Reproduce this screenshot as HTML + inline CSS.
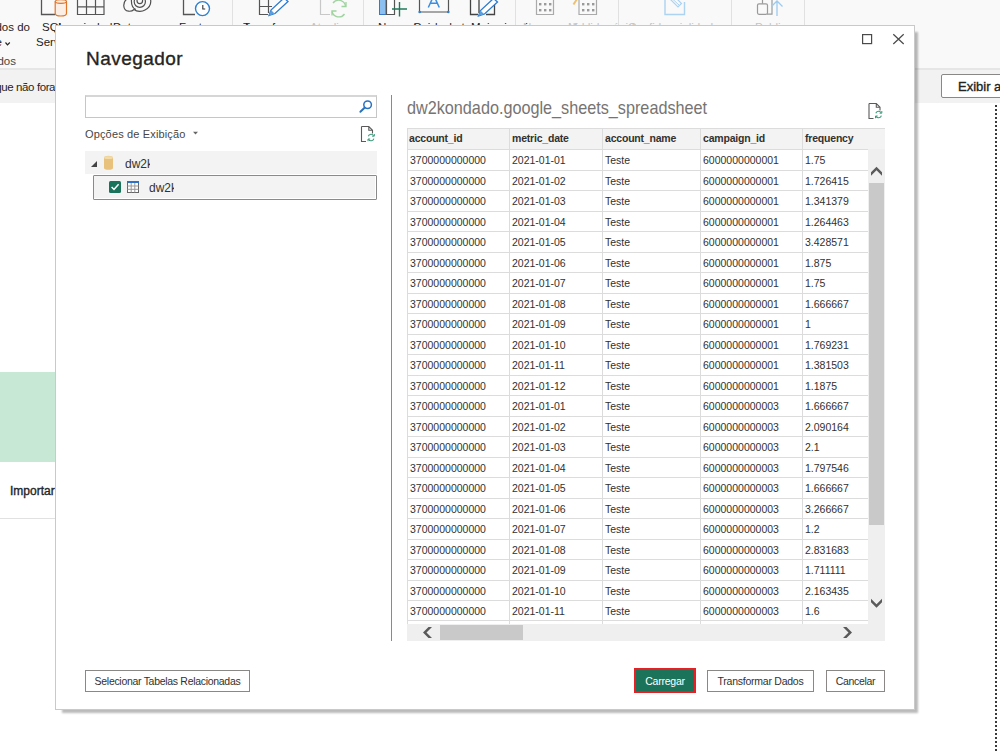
<!DOCTYPE html>
<html><head><meta charset="utf-8">
<style>
*{box-sizing:border-box;margin:0;padding:0}
html,body{width:1000px;height:752px;overflow:hidden;background:#fff}
body{position:relative;font-family:"Liberation Sans",sans-serif;color:#252423}
.a{position:absolute}
.rib{left:0;top:0;width:1000px;height:69px;background:#f9f9f9}
.ribline{left:0;top:68px;width:1000px;height:2px;background:#e6e6e6}
.bar{left:0;top:70px;width:1000px;height:33px;background:#f2f2f2}
.lbl{font-size:12px;color:#252423;white-space:pre;line-height:14px}
.sep{width:1px;background:#e1e1e1}
.dlg{left:55px;top:25px;width:860px;height:685px;background:#fff;border:1px solid #c9c9c9;box-shadow:5px 5px 2px -2px rgba(0,0,0,.27)}
.txt{white-space:pre}
.tr{position:absolute;left:407px;width:461px;border-top:1px solid #dcdcdc;overflow:hidden}
.td{position:absolute;top:0;height:100%;border-left:1px solid #dcdcdc;padding-left:2px;font-size:10.5px;line-height:20px;color:#323130;white-space:pre;overflow:hidden}
.c1{left:0;width:102px}
.c2{left:102px;width:93px}
.c3{left:195px;width:98px}
.c4{left:293px;width:102px}
.c5{left:395px;width:100px}
.th{position:absolute;top:0;height:100%;border-left:1px solid #dcdcdc;padding-left:2px;font-size:10.5px;font-weight:700;letter-spacing:-0.2px;line-height:20px;color:#323130;white-space:pre}
.btn{position:absolute;height:22px;border:1px solid #8a8886;background:#fff;font-size:10.5px;letter-spacing:-0.25px;line-height:20px;text-align:center;color:#323130;white-space:pre}
</style></head><body>
<div class="a rib"></div>
<div class="a ribline"></div>
<div class="a bar"></div>
<!-- ribbon labels -->
<div class="a lbl" style="right:970px;top:20px;font-size:11.5px;text-align:right">Hub de dados do</div>
<div class="a lbl" style="right:998px;top:35px;font-size:11.5px;text-align:right">OneLake</div>
<svg class="a" style="left:0;top:0" width="1000" height="69" viewBox="0 0 1000 69">
 <path d="M5.5 42.5 L7.5 44.8 L9.8 42.5" fill="none" stroke="#252423" stroke-width="1.2"/>
 <!-- SQL server -->
 <path d="M41.5 -1 V14.5 H55" fill="none" stroke="#555" stroke-width="1.3"/>
 <path d="M55.2 1.5 V13.5 Q55.2 16 60.8 16 Q66.5 16 66.5 13.5 V1.5" fill="#fbeee4" stroke="#e07428" stroke-width="1.2"/>
 <ellipse cx="60.85" cy="1.5" rx="5.65" ry="1.8" fill="#fbeee4" stroke="#e07428" stroke-width="1.2"/>
 <!-- grid -->
 <path d="M77.5 -1 V14.5 H104 V-1 M86.5 -1 V14.5 M95.5 -1 V14.5 M77.5 6.8 H104" fill="none" stroke="#555" stroke-width="1.2"/>
 <!-- dataverse swirl -->
 <path d="M127 -1 C122.5 2 122.5 10.5 128.5 11.2 C131 11.5 133 10.5 134 9.5 C137 11.8 142 11.8 145 10 C149 8 151.5 4 150.5 -1" fill="none" stroke="#505050" stroke-width="1.2"/>
 <path d="M131.5 -1 C131 5 133 8.5 136 9.5" fill="none" stroke="#505050" stroke-width="1.2"/>
 <circle cx="139.8" cy="1.8" r="5.6" fill="none" stroke="#505050" stroke-width="1.2"/>
 <circle cx="139.8" cy="0.8" r="2.8" fill="none" stroke="#505050" stroke-width="1.2"/>
 <!-- fontes recentes -->
 <path d="M183.5 -1 V14.5 H195" fill="none" stroke="#555" stroke-width="1.3"/>
 <circle cx="202.5" cy="8.6" r="7" fill="#fff" stroke="#2f80d0" stroke-width="1.4"/>
 <path d="M202.8 5 V9 H205.2" fill="none" stroke="#333" stroke-width="1.1"/>
 <rect x="232" y="0" width="1" height="25" fill="#e1e1e1"/>
 <!-- transformar -->
 <path d="M259.5 -1 V14.5 H268 M259.5 6.5 H272 M268.5 -1 V13" fill="none" stroke="#555" stroke-width="1.2"/>
 <path d="M269 15.5 L271 10 L284 -2 L288 1.5 L275 13.5 Z" fill="#fff" stroke="#2b7bd0" stroke-width="1.3"/>
 <path d="M269 15.5 L271 10 L274.5 13.5 Z" fill="#5aa0e0"/>
 <!-- atualizar -->
 <path d="M320.5 -1 V14.5 H330" fill="none" stroke="#c8c8c8" stroke-width="1.2"/>
 <path d="M333 3 A7 7 0 0 1 345.5 6 M344.5 14 A7 7 0 0 1 332 11.5" fill="none" stroke="#9fd39f" stroke-width="1.3"/>
 <path d="M346 2 V6.5 H341.5 M332 15.5 V11 H336.5" fill="none" stroke="#9fd39f" stroke-width="1.3"/>
 <rect x="363" y="0" width="1" height="25" fill="#e1e1e1"/>
 <!-- novo visual -->
 <rect x="379.5" y="-1" width="6.5" height="15.5" fill="#8cc0f0" stroke="#3a78c5" stroke-width="1"/>
 <path d="M386.5 -1 V14.5 H394.5 V-1" fill="#fff" stroke="#555" stroke-width="1.2"/>
 <path d="M399.5 2 V16.5 M392 9 H407" fill="none" stroke="#1f7a5b" stroke-width="1.4"/>
 <!-- caixa de texto -->
 <path d="M419.5 -1 V12 H448.5 V-1" fill="none" stroke="#555" stroke-width="1.2"/>
 <circle cx="419.7" cy="12" r="1.3" fill="#2f80d0"/><circle cx="448.3" cy="12" r="1.3" fill="#2f80d0"/>
 <path d="M428.3 7.5 L433.8 -4.5 L439.3 7.5 M430.2 3.3 H437.4" fill="none" stroke="#3b8ee0" stroke-width="1.5"/>
 <!-- mais visuais -->
 <path d="M478 14.5 H470.5 V-1 M479 -1 V13 M486 14.5 H494.5 V-1" fill="none" stroke="#444" stroke-width="1.3"/>
 <path d="M478.5 16 L480.5 10.5 L493.5 -1.5 L497.5 2 L484.5 14 Z" fill="#fff" stroke="#2b7bd0" stroke-width="1.3"/>
 <path d="M478.5 16 L480.5 10.5 L484 14 Z" fill="#5aa0e0"/>
 <rect x="515" y="0" width="1" height="25" fill="#e1e1e1"/>
 <!-- nova medida -->
 <path d="M536.5 -1 V14.5 H553.5 V-1" fill="none" stroke="#aaa" stroke-width="1.2"/>
 <g fill="#9a9a9a"><rect x="539" y="3" width="2.4" height="2.4"/><rect x="544" y="3" width="2.4" height="2.4"/><rect x="549" y="3" width="2.4" height="2.4"/><rect x="539" y="9" width="2.4" height="2.4"/><rect x="544" y="9" width="2.4" height="2.4"/><rect x="549" y="9" width="2.4" height="2.4"/></g>
 <path d="M573.5 4.5 L577 -1" fill="none" stroke="#f0c070" stroke-width="2"/>
 <path d="M579 -1 V14.5 H596.5 V-1" fill="none" stroke="#aaa" stroke-width="1.2"/>
 <g fill="#9a9a9a"><rect x="582" y="3" width="2.4" height="2.4"/><rect x="587" y="3" width="2.4" height="2.4"/><rect x="592" y="3" width="2.4" height="2.4"/><rect x="582" y="9" width="2.4" height="2.4"/><rect x="587" y="9" width="2.4" height="2.4"/><rect x="592" y="9" width="2.4" height="2.4"/></g>
 <rect x="618" y="0" width="1" height="25" fill="#e1e1e1"/>
 <!-- confidencialidade -->
 <path d="M665 -1 V14.5 H684.5 V2" fill="none" stroke="#acd3f2" stroke-width="1.4"/>
 <path d="M670 -1 L678 7 L681.5 3.5 L675 -3" fill="none" stroke="#acd3f2" stroke-width="1.2"/>
 <path d="M672.5 -1 L679 5" fill="none" stroke="#acd3f2" stroke-width="1"/>
 <rect x="731" y="0" width="1" height="25" fill="#e1e1e1"/>
 <!-- publicar -->
 <rect x="757.5" y="3.8" width="10" height="10.5" rx="1.5" fill="none" stroke="#9a9a9a" stroke-width="1.2"/>
 <path d="M762.5 0 V3.8 M772 -1 V14.2 H767" fill="none" stroke="#9a9a9a" stroke-width="1.2"/>
 <path d="M777 16 V1 M771.5 6.5 L777 1 L782.5 6.5" fill="none" stroke="#9ccbef" stroke-width="1.3"/>
 <rect x="804" y="0" width="1" height="25" fill="#e1e1e1"/>
</svg>
<div class="a lbl" style="left:42px;top:20px;font-size:11.5px">SQL</div>
<div class="a lbl" style="left:36px;top:35px;font-size:11.5px">Server</div>
<div class="a lbl" style="left:58px;top:20px;font-size:11.5px">Inserir dados</div>
<div class="a lbl" style="left:113px;top:20px;font-size:11.5px">Dataverse</div>
<div class="a lbl" style="left:179px;top:20px;font-size:11.5px">Fontes recentes</div>
<div class="a lbl" style="left:243px;top:20px;font-size:11.5px">Transformar</div>
<div class="a lbl" style="left:310px;top:20px;font-size:11.5px;color:#c4c4c4">Atualizar</div>
<div class="a lbl" style="left:378px;top:20px;font-size:11.5px">Novo visual</div>
<div class="a lbl" style="left:413px;top:20px;font-size:11.5px">Caixa de texto</div>
<div class="a lbl" style="left:471px;top:20px;font-size:11.5px">Mais visuais</div>
<div class="a lbl" style="left:523px;top:20px;font-size:11.5px;color:#c4c4c4">Nova medida</div>
<div class="a lbl" style="left:568px;top:20px;font-size:11.5px;color:#c4c4c4">Medida rápida</div>
<div class="a lbl" style="left:628px;top:20px;font-size:11.5px;color:#c4c4c4">Confidencialidade</div>
<div class="a lbl" style="left:755px;top:20px;font-size:11.5px;color:#c4c4c4">Publicar</div>
<div class="a lbl" style="right:984px;top:54px;font-size:11.5px;color:#484644;text-align:right">Dados</div>
<!-- bar -->
<div class="a txt" style="left:-4.7px;top:80px;font-size:11.5px;line-height:15px;letter-spacing:-0.4px;color:#252423">que não foram</div>
<div class="a" style="left:941px;top:74px;width:80px;height:24px;border:1px solid #8a8886;border-radius:2px;background:#fff"></div>
<div class="a txt" style="left:958px;top:79px;font-size:13px;line-height:15px;font-weight:400;-webkit-text-stroke:0.35px #252423;color:#252423">Exibir alterações</div>
<!-- canvas left -->
<div class="a" style="left:0;top:372px;width:60px;height:90px;background:#c8e8d6"></div>
<div class="a txt" style="left:10px;top:484px;font-size:12px;line-height:14px;font-weight:400;-webkit-text-stroke:0.35px #252423;color:#252423">Importar</div>
<div class="a" style="left:0;top:518px;width:60px;height:1px;background:#e1e1e1"></div>
<div class="a" style="left:995px;top:105px;width:2px;height:660px;background-image:linear-gradient(#3a3a3a 50%,transparent 50%);background-size:2px 4px"></div>
<div class="a dlg"></div>
<svg class="a" style="left:855px;top:28px" width="56" height="22" viewBox="855 28 56 22">
 <rect x="862.6" y="34.6" width="9" height="9" fill="none" stroke="#4a4a4a" stroke-width="1.2"/>
 <path d="M893.3 34.2 L903.7 44 M903.7 34.2 L893.3 44" fill="none" stroke="#4a4a4a" stroke-width="1.2"/>
</svg>
<div class="a txt" style="left:86px;top:48px;font-size:19px;line-height:22px;letter-spacing:0.45px;font-weight:400;-webkit-text-stroke:0.35px #252423;color:#252423">Navegador</div>
<!-- search -->
<div class="a" style="left:85px;top:95px;width:292px;height:23px;border:1px solid #c6c6c6;border-top:2px solid #d6d6d6;background:#fff"></div>
<svg class="a" style="left:355px;top:96px" width="22" height="20" viewBox="355 96 22 20">
 <circle cx="367.6" cy="104.8" r="3.8" fill="none" stroke="#2a72c0" stroke-width="1.5"/>
 <path d="M364.8 107.6 L360.4 111.7" fill="none" stroke="#2a72c0" stroke-width="2" stroke-linecap="round"/>
</svg>
<div class="a txt" style="left:85px;top:128px;font-size:11px;line-height:13px;letter-spacing:0.15px;color:#484644">Opções de Exibição</div>
<svg class="a" style="left:190px;top:128px" width="10" height="10" viewBox="190 128 10 10">
 <path d="M193 131.8 H198 L195.5 134.5 Z" fill="#666"/>
</svg>
<svg class="a" style="left:358px;top:123px" width="20" height="20" viewBox="358 123 20 20">
 <path d="M361.5 126.5 H368.8 L372.5 130.2 V133.5 M361.5 126.5 V141.5 H366 M368.8 126.5 V130.2 H372.5" fill="none" stroke="#5a5a5a" stroke-width="1.1"/>
 <path d="M368.3 136.2 A2.9 2.9 0 0 1 373.6 135.8 M373.9 138.6 A2.9 2.9 0 0 1 368.5 139.2" fill="none" stroke="#3a9a7a" stroke-width="1.1"/>
 <path d="M374.3 134 V136.2 H372.1 M368 141.2 V139 H370.2" fill="none" stroke="#3a9a7a" stroke-width="1"/>
</svg>
<!-- tree -->
<div class="a" style="left:85px;top:151px;width:292px;height:23px;background:#f3f3f3"></div>
<svg class="a" style="left:88px;top:153px" width="30" height="20" viewBox="88 153 30 20">
 <path d="M91 167 L97 161 V167 Z" fill="#444"/>
 <path d="M104 157.3 V168 Q104 169.8 108.5 169.8 Q113 169.8 113 168 V157.3 Z" fill="#e8c27c"/>
 <ellipse cx="108.5" cy="157.3" rx="4.5" ry="1.6" fill="#edcf95"/>
 <ellipse cx="108.5" cy="157.8" rx="4.5" ry="1.2" fill="#f2dba8"/>
</svg>
<div class="a txt" style="left:125px;top:157px;width:25px;overflow:hidden;font-size:12px;line-height:14px;color:#323130">dw2kondado</div>
<div class="a" style="left:93px;top:175px;width:284px;height:25px;border:1px solid #8a8a8a;background:#f3f3f3;border-radius:1px;box-shadow:inset -1px -1px 0 #fff"></div>
<svg class="a" style="left:106px;top:178px" width="40" height="20" viewBox="106 178 40 20">
 <rect x="109" y="181" width="12" height="12" rx="1.5" fill="#18735a"/>
 <path d="M111.6 187 L114 189.5 L118.6 184.3" fill="none" stroke="#fff" stroke-width="1.5"/>
 <rect x="127.5" y="181.5" width="11" height="11" fill="#fff" stroke="#666" stroke-width="1"/>
 <rect x="127" y="181" width="12" height="2" fill="#2f72c4"/>
 <path d="M127.5 186 H138.5 M127.5 189.3 H138.5 M131.2 183 V192.5 M134.8 183 V192.5" stroke="#999" stroke-width="1"/>
</svg>
<div class="a txt" style="left:149px;top:181px;width:25px;overflow:hidden;font-size:12px;line-height:14px;color:#323130">dw2kondado</div>
<!-- divider -->
<div class="a" style="left:391px;top:95px;width:1px;height:546px;background:#8a8a8a"></div>
<div class="a txt" style="left:407px;top:98px;font-size:18.5px;line-height:20px;color:#767472;transform:scaleX(0.876);transform-origin:0 0">dw2kondado.google_sheets_spreadsheet</div>
<svg class="a" style="left:865px;top:100px" width="20" height="20" viewBox="357.5 123 20 20">
 <path d="M361.5 126.5 H368.8 L372.5 130.2 V133.5 M361.5 126.5 V141.5 H366 M368.8 126.5 V130.2 H372.5" fill="none" stroke="#5a5a5a" stroke-width="1.1"/>
 <path d="M368.3 136.2 A2.9 2.9 0 0 1 373.6 135.8 M373.9 138.6 A2.9 2.9 0 0 1 368.5 139.2" fill="none" stroke="#3a9a7a" stroke-width="1.1"/>
 <path d="M374.3 134 V136.2 H372.1 M368 141.2 V139 H370.2" fill="none" stroke="#3a9a7a" stroke-width="1"/>
</svg>
<!-- table header -->
<div class="a" style="left:407px;top:128px;width:478px;height:21px;background:#f3f3f3;border-top:1px solid #dcdcdc;border-left:1px solid #dcdcdc"></div>
<div class="tr" style="top:128px;height:21px;width:478px;border-top:none">
 <div class="th c1" style="border-left:none">account_id</div><div class="th c2">metric_date</div><div class="th c3">account_name</div><div class="th c4">campaign_id</div><div class="th c5">frequency</div>
</div>
<div class="tr" style="top:149px;height:21px"><div class="td c1">3700000000000</div><div class="td c2">2021-01-01</div><div class="td c3">Teste</div><div class="td c4">6000000000001</div><div class="td c5">1.75</div></div>
<div class="tr" style="top:170px;height:20px"><div class="td c1">3700000000000</div><div class="td c2">2021-01-02</div><div class="td c3">Teste</div><div class="td c4">6000000000001</div><div class="td c5">1.726415</div></div>
<div class="tr" style="top:190px;height:21px"><div class="td c1">3700000000000</div><div class="td c2">2021-01-03</div><div class="td c3">Teste</div><div class="td c4">6000000000001</div><div class="td c5">1.341379</div></div>
<div class="tr" style="top:211px;height:20px"><div class="td c1">3700000000000</div><div class="td c2">2021-01-04</div><div class="td c3">Teste</div><div class="td c4">6000000000001</div><div class="td c5">1.264463</div></div>
<div class="tr" style="top:231px;height:21px"><div class="td c1">3700000000000</div><div class="td c2">2021-01-05</div><div class="td c3">Teste</div><div class="td c4">6000000000001</div><div class="td c5">3.428571</div></div>
<div class="tr" style="top:252px;height:20px"><div class="td c1">3700000000000</div><div class="td c2">2021-01-06</div><div class="td c3">Teste</div><div class="td c4">6000000000001</div><div class="td c5">1.875</div></div>
<div class="tr" style="top:272px;height:21px"><div class="td c1">3700000000000</div><div class="td c2">2021-01-07</div><div class="td c3">Teste</div><div class="td c4">6000000000001</div><div class="td c5">1.75</div></div>
<div class="tr" style="top:293px;height:20px"><div class="td c1">3700000000000</div><div class="td c2">2021-01-08</div><div class="td c3">Teste</div><div class="td c4">6000000000001</div><div class="td c5">1.666667</div></div>
<div class="tr" style="top:313px;height:21px"><div class="td c1">3700000000000</div><div class="td c2">2021-01-09</div><div class="td c3">Teste</div><div class="td c4">6000000000001</div><div class="td c5">1</div></div>
<div class="tr" style="top:334px;height:20px"><div class="td c1">3700000000000</div><div class="td c2">2021-01-10</div><div class="td c3">Teste</div><div class="td c4">6000000000001</div><div class="td c5">1.769231</div></div>
<div class="tr" style="top:354px;height:21px"><div class="td c1">3700000000000</div><div class="td c2">2021-01-11</div><div class="td c3">Teste</div><div class="td c4">6000000000001</div><div class="td c5">1.381503</div></div>
<div class="tr" style="top:375px;height:20px"><div class="td c1">3700000000000</div><div class="td c2">2021-01-12</div><div class="td c3">Teste</div><div class="td c4">6000000000001</div><div class="td c5">1.1875</div></div>
<div class="tr" style="top:395px;height:21px"><div class="td c1">3700000000000</div><div class="td c2">2021-01-01</div><div class="td c3">Teste</div><div class="td c4">6000000000003</div><div class="td c5">1.666667</div></div>
<div class="tr" style="top:416px;height:20px"><div class="td c1">3700000000000</div><div class="td c2">2021-01-02</div><div class="td c3">Teste</div><div class="td c4">6000000000003</div><div class="td c5">2.090164</div></div>
<div class="tr" style="top:436px;height:21px"><div class="td c1">3700000000000</div><div class="td c2">2021-01-03</div><div class="td c3">Teste</div><div class="td c4">6000000000003</div><div class="td c5">2.1</div></div>
<div class="tr" style="top:457px;height:20px"><div class="td c1">3700000000000</div><div class="td c2">2021-01-04</div><div class="td c3">Teste</div><div class="td c4">6000000000003</div><div class="td c5">1.797546</div></div>
<div class="tr" style="top:477px;height:21px"><div class="td c1">3700000000000</div><div class="td c2">2021-01-05</div><div class="td c3">Teste</div><div class="td c4">6000000000003</div><div class="td c5">1.666667</div></div>
<div class="tr" style="top:498px;height:20px"><div class="td c1">3700000000000</div><div class="td c2">2021-01-06</div><div class="td c3">Teste</div><div class="td c4">6000000000003</div><div class="td c5">3.266667</div></div>
<div class="tr" style="top:518px;height:21px"><div class="td c1">3700000000000</div><div class="td c2">2021-01-07</div><div class="td c3">Teste</div><div class="td c4">6000000000003</div><div class="td c5">1.2</div></div>
<div class="tr" style="top:539px;height:20px"><div class="td c1">3700000000000</div><div class="td c2">2021-01-08</div><div class="td c3">Teste</div><div class="td c4">6000000000003</div><div class="td c5">2.831683</div></div>
<div class="tr" style="top:559px;height:21px"><div class="td c1">3700000000000</div><div class="td c2">2021-01-09</div><div class="td c3">Teste</div><div class="td c4">6000000000003</div><div class="td c5">1.711111</div></div>
<div class="tr" style="top:580px;height:20px"><div class="td c1">3700000000000</div><div class="td c2">2021-01-10</div><div class="td c3">Teste</div><div class="td c4">6000000000003</div><div class="td c5">2.163435</div></div>
<div class="tr" style="top:600px;height:21px"><div class="td c1">3700000000000</div><div class="td c2">2021-01-11</div><div class="td c3">Teste</div><div class="td c4">6000000000003</div><div class="td c5">1.6</div></div><div class="tr" style="top:620px;height:4px"><div class="td c1"></div><div class="td c2"></div><div class="td c3"></div><div class="td c4"></div><div class="td c5"></div></div>
<!-- v scrollbar -->
<div class="a" style="left:868px;top:149px;width:17px;height:475px;background:#efefef"></div>
<div class="a" style="left:869px;top:183px;width:15px;height:342px;background:#c9c9c9"></div>
<svg class="a" style="left:868px;top:160px" width="17" height="20" viewBox="868 160 17 20">
 <path d="M871 172.3 L876.5 166.8 L882 172.3 V175.8 L876.5 170.3 L871 175.8 Z" fill="#5a5a5a"/>
</svg>
<svg class="a" style="left:868px;top:592px" width="17" height="20" viewBox="868 592 17 20">
 <path d="M871 602.3 L876.5 607.8 L882 602.3 V598.8 L876.5 604.3 L871 598.8 Z" fill="#5a5a5a"/>
</svg>
<!-- h scrollbar -->
<div class="a" style="left:407px;top:624px;width:478px;height:17px;background:#efefef"></div>
<div class="a" style="left:440px;top:625px;width:83px;height:15px;background:#c9c9c9"></div>
<svg class="a" style="left:415px;top:624px" width="20" height="17" viewBox="415 624 20 17">
 <path d="M432 627 L426.5 632.5 L432 638 H428.5 L423 632.5 L428.5 627 Z" fill="#5a5a5a"/>
</svg>
<svg class="a" style="left:838px;top:624px" width="20" height="17" viewBox="838 624 20 17">
 <path d="M843 627 L848.5 632.5 L843 638 H846.5 L852 632.5 L846.5 627 Z" fill="#5a5a5a"/>
</svg>
<!-- buttons -->
<div class="btn" style="left:85px;top:670px;width:165px;letter-spacing:-0.3px">Selecionar Tabelas Relacionadas</div>
<div class="a" style="left:634px;top:668px;width:62px;height:25px;background:#e81f25"></div>
<div class="btn" style="left:636px;top:670px;width:58px;height:21px;background:#1b735a;border:1px solid #1b735a;color:#fff">Carregar</div>
<div class="btn" style="left:707px;top:670px;width:107px">Transformar Dados</div>
<div class="btn" style="left:826px;top:670px;width:59px;letter-spacing:-0.3px">Cancelar</div>
</body></html>
